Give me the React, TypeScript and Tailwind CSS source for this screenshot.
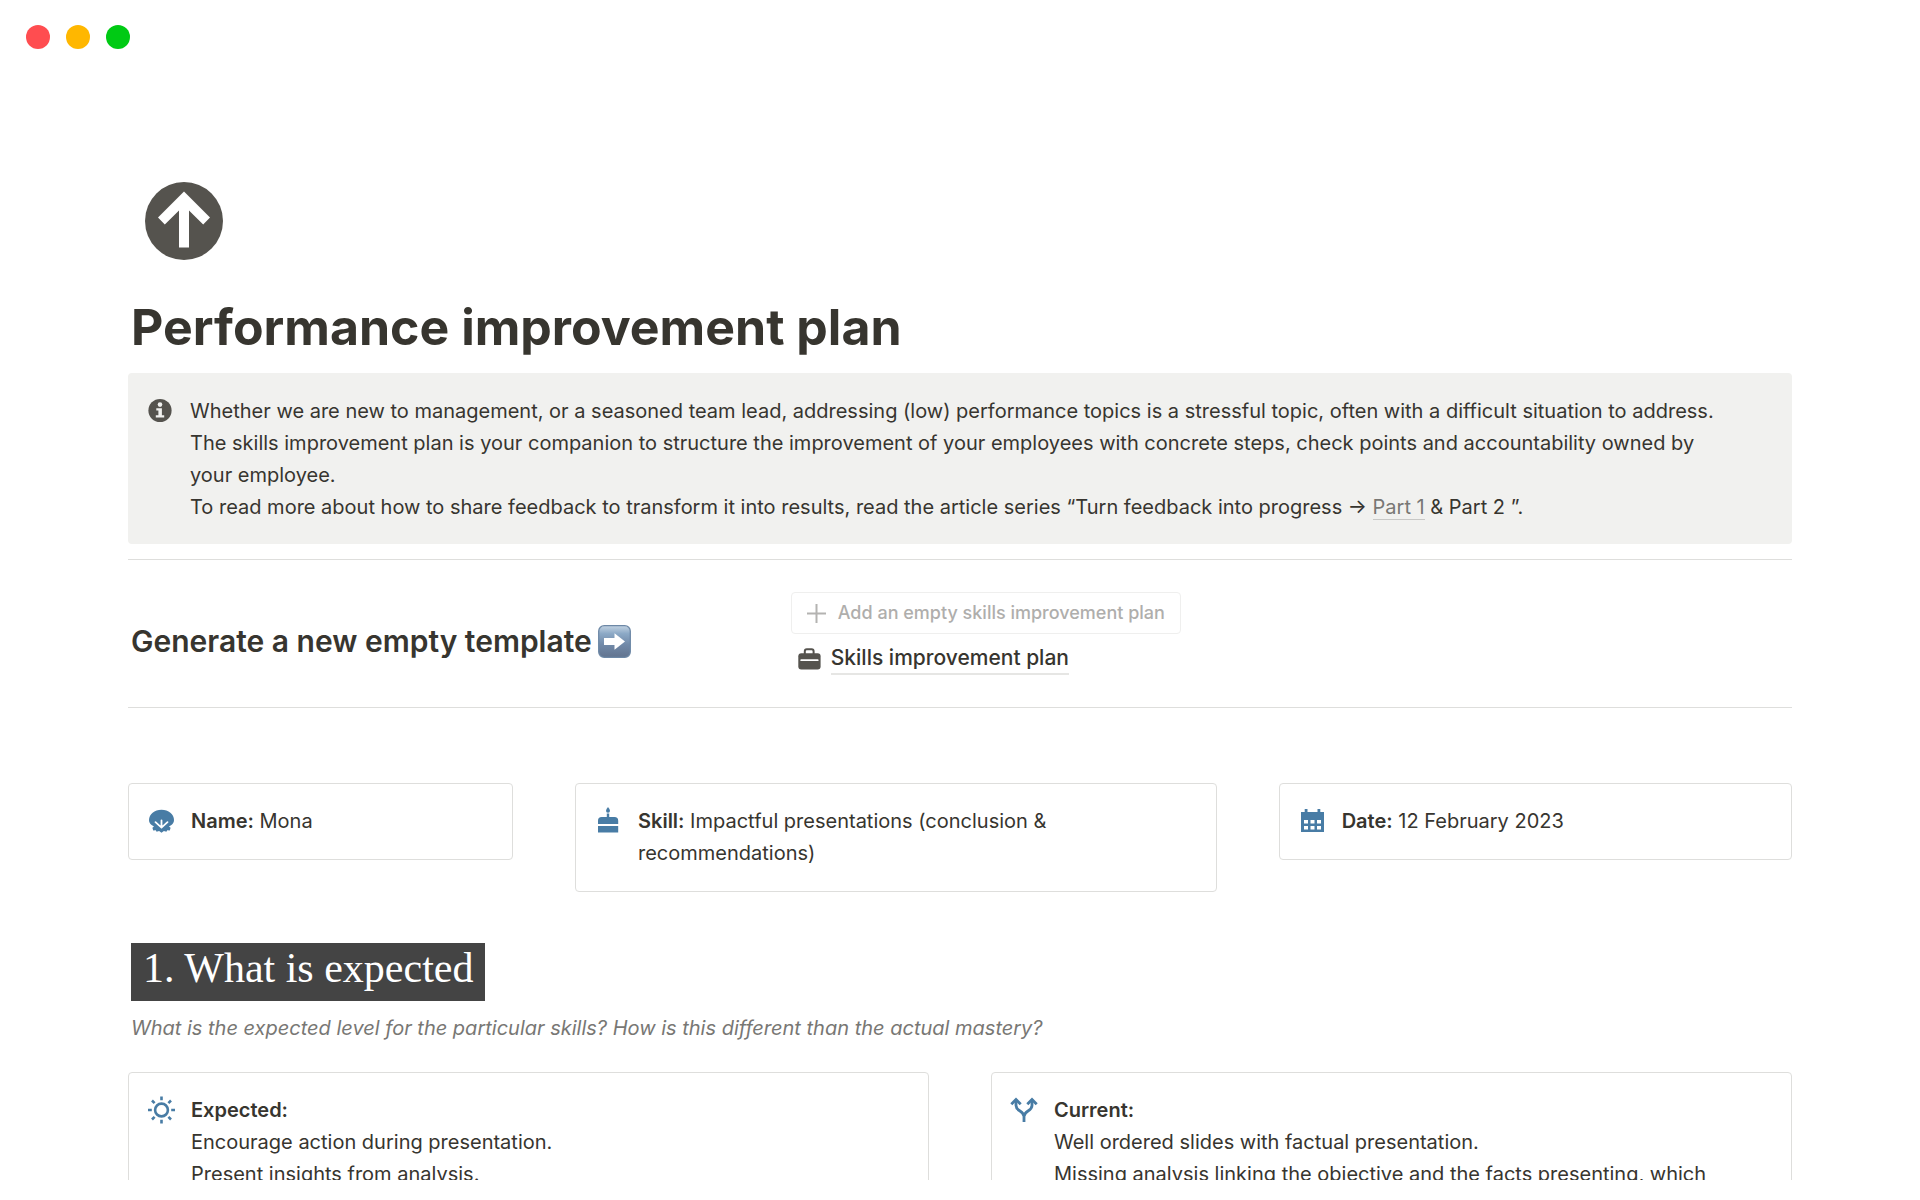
import type { ReactNode } from "react";

const TRAFFIC_LIGHTS = [
  { label: "Close", className: "bg-[#ff4d50]" },
  { label: "Minimize", className: "bg-[#ffb700]" },
  { label: "Zoom", className: "bg-[#00ca14]" }
];

const iconClass = "mt-[3px] h-[26px] w-[26px] flex-shrink-0 overflow-visible";

function PageIcon() {
  return (
    <svg viewBox="0 0 78 78" className="ml-[14px] h-[78px] w-[78px]">
      <circle cx="39" cy="39" r="39" fill="#55534e" />
      <path d="M39 9.500 65 35.500 58.200 42.500 44 28.400V65.500H34V28.400L19.800 42.500 13 35.500Z" fill="#fff" />
    </svg>
  );
}

function InfoIcon() {
  return (
    <svg viewBox="0 0 26 26" className={iconClass}>
      <circle cx="12" cy="12.500" r="11.600" fill="#55534e" />
      <circle cx="12" cy="6.600" r="2.300" fill="#f1f1ef" />
      <path d="M8.300 10.300h5.600v7h2.300v2.300H7.800v-2.300h2.600v-4.700H8.300Z" fill="#f1f1ef" />
    </svg>
  );
}

function BriefcaseIcon() {
  return (
    <svg viewBox="0 0 23 22" className="h-[22px] w-[23px] flex-shrink-0">
      <path d="M6.800 6V3.200Q6.800 1.200 8.800 1.200h4.800Q15.600 1.200 15.600 3.200V6" fill="none" stroke="#55534e" strokeWidth="2" />
      <rect x="0.300" y="5.200" width="22.300" height="16.300" rx="3" fill="#55534e" />
      <path d="M3.200 12.200h16.500" stroke="#fff" strokeWidth="1.800" strokeLinecap="round" />
    </svg>
  );
}

function ShellIcon() {
  return (
    <svg viewBox="0 0 26 26" className={iconClass}>
      <path
        d="M12.500 1.700C19.500 1.700 25 6.200 25 12c0 2.200-.9 3.800-2.600 4.900l-2.400 1.700 1.600 1.200-.8 2.600-2.600-.2-.8 1.600-2.500-.8-2.400 1.700-2.400-1.700-2.500.8-.8-1.600-2.600.2-.8-2.600L5 18.600l-2.400-1.700C.9 15.800 0 14.200 0 12 0 6.200 5.500 1.700 12.500 1.700Z"
        fill="#487ca5"
      />
      <path d="M12.500 12.500v7M6.500 14.200l6 5.400 6-5.400" fill="none" stroke="#fff" strokeWidth="1.800" strokeLinecap="round" />
    </svg>
  );
}

function CakeIcon() {
  return (
    <svg viewBox="0 0 26 26" className={iconClass} fill="#487ca5">
      <path d="M12-1q2 2.400 2 3.700a2 2 0 0 1-4 0Q10 1.400 12-1Z" />
      <path d="M10.800 5.500h2.400V9h5.300q3.700 0 3.700 3.700V16H2v-3.300Q2 9 5.600 9h5.200Z" />
      <path d="M2 18h20.200v6.500H2Z" />
    </svg>
  );
}

function CalendarIcon() {
  return (
    <svg viewBox="0 0 26 26" className={iconClass}>
      <path d="M4.700 1h2.800v3h10V1h2.800v3H24v20H1V4h3.700Z" fill="#487ca5" />
      <path
        d="M4 12h4v3.600H4ZM10.500 12h4v3.600h-4ZM17 12h4v3.600h-4ZM4 18h4v3.400H4ZM10.500 18h4v3.400h-4ZM17 18h4v3.400h-4Z"
        fill="#fff"
      />
    </svg>
  );
}

function SunIcon() {
  return (
    <svg viewBox="0 0 26 26" className={iconClass} fill="none" stroke="#487ca5" strokeWidth="2.600">
      <circle cx="12.500" cy="13" r="6.400" />
      <path d="M12.500-.5v3.800M12.500 22.700v3.800M-1 13h3.800M22.200 13H26M3 3.500 5.600 6.100M19.400 19.900 22 22.500M22 3.500l-2.600 2.600M5.600 19.900 3 22.500" />
    </svg>
  );
}

function ForkIcon() {
  return (
    <svg viewBox="0 0 26 26" className={iconClass} fill="none" stroke="#487ca5" strokeWidth="2.800">
      <path d="M4 2.500V8.500C4 14.500 12 13.500 12 19.500V25M20 2.500V8.500C20 14.500 12 13.500 12 19.500" />
      <path d="M-.7 7.300 4 2.600 8.700 7.300M15.300 7.300 20 2.600 24.700 7.300" />
    </svg>
  );
}

function ArrowEmoji() {
  return (
    <svg viewBox="0 0 33 33" className="h-[33px] w-[33px] flex-shrink-0" role="img" aria-label="right arrow">
      <defs>
        <linearGradient id="arrow-face" x1="0" y1="0" x2="0" y2="1">
          <stop offset="0" stopColor="#c3d3e2" />
          <stop offset="0.250" stopColor="#8ca9c6" />
          <stop offset="0.600" stopColor="#7189a8" />
          <stop offset="1" stopColor="#62748f" />
        </linearGradient>
      </defs>
      <rect x="0.700" y="0.700" width="31.600" height="31.600" rx="5.500" fill="url(#arrow-face)" stroke="#6d88a6" strokeWidth="1.300" />
      <path d="M6 13h10.500V8.200L27 16.500 16.500 24.800V20H6Z" fill="#fff" />
    </svg>
  );
}

function Card({ icon, children }: { icon: ReactNode; children: ReactNode }) {
  return (
    <div className="flex items-start gap-4 rounded-[4px] border border-[#dededc] px-5 pt-[21px] pb-[22px]">
      {icon}
      <div className="min-w-0 flex-1">{children}</div>
    </div>
  );
}

export default function App() {
  return (
    <div className="flex h-screen flex-col overflow-hidden bg-white pb-5 font-['Inter',sans-serif] text-[20px] leading-[32px] text-[#37352f]">
      {/* Window controls */}
      <header className="flex flex-shrink-0 gap-4 px-[26px] pt-[25px]">
        {TRAFFIC_LIGHTS.map((light) => (
          <button key={light.label} aria-label={light.label} className={`h-6 w-6 rounded-full ${light.className}`} />
        ))}
      </header>

      <main className="min-h-0 flex-1 overflow-hidden px-32 pt-[133px]">
        <div className="px-[3px]">
          <PageIcon />
          <h1 className="mt-9 text-[50px] leading-[63px] font-bold">Performance improvement plan</h1>
        </div>

        {/* Intro callout */}
        <section className="mt-[14px] flex items-start gap-4 rounded-[4px] bg-[#f1f1ef] pt-[22px] pr-14 pb-[21px] pl-5">
          <InfoIcon />
          <div className="min-w-0 flex-1">
            <p>
              Whether we are new to management, or a seasoned team lead, addressing (low) performance topics is a
              stressful topic, often with a difficult situation to address.
              <br />
              The skills improvement plan is your companion to structure the improvement of your employees with
              concrete steps, check points and accountability owned by your employee.
            </p>
            <p>
              To read more about how to share feedback to transform it into results, read the article series “Turn
              feedback into progress →{" "}
              <a href="#part-1" className="border-b border-[#c8c8c6] text-[#787774]">
                Part 1
              </a>{" "}
              &amp; Part 2 ”.
            </p>
          </div>
        </section>

        <hr className="mt-[15px] border-[#dededc]" />

        {/* Template generator */}
        <section className="mt-8 grid grid-cols-[3fr_5fr] items-start gap-[62px]">
          <h2 className="mt-7 flex items-center gap-[6px] pl-[3px] text-[30px] leading-[42px] font-semibold whitespace-nowrap">
            Generate a new empty template
            <ArrowEmoji />
          </h2>
          <div>
            <button className="flex h-[42px] items-center gap-3 rounded-[4px] border border-[#efefee] px-[15px] text-[18px] font-medium text-[#afaeac]">
              <svg viewBox="0 0 19 19" className="h-[19px] w-[19px]" stroke="#b4b3b1" strokeWidth="2">
                <path d="M9.500 0v19M0 9.500h19" />
              </svg>
              Add an empty skills improvement plan
            </button>
            <a href="#skills-improvement-plan" className="mt-[9px] flex w-fit items-center gap-[10px] pl-[7px] text-[21px] font-medium">
              <BriefcaseIcon />
              <span className="border-b-2 border-[#e6e6e4] leading-[30px]">Skills improvement plan</span>
            </a>
          </div>
        </section>

        <hr className="mt-8 border-[#dededc]" />

        <section className="mt-[75px] grid grid-cols-[3fr_5fr_4fr] items-start gap-[62px]">
          <Card icon={<ShellIcon />}>
            <strong className="font-semibold">Name:</strong> Mona
          </Card>
          <Card icon={<CakeIcon />}>
            <strong className="font-semibold">Skill:</strong> Impactful presentations (conclusion &amp;
            recommendations)
          </Card>
          <Card icon={<CalendarIcon />}>
            <strong className="font-semibold">Date:</strong> 12 February 2023
          </Card>
        </section>

        {/* 1. What is expected */}
        <section className="mt-[51px]">
          <div className="px-[3px]">
            <h2 className="w-fit bg-[#444] px-3 pb-2 font-['Liberation_Serif',serif] text-[42px] leading-[50px] text-white">
              1. What is expected
            </h2>
            <p className="mt-[11px] text-[#787774] italic">
              What is the expected level for the particular skills? How is this different than the actual mastery?
            </p>
          </div>
          <div className="mt-7 grid grid-cols-2 gap-[62px]">
            <Card icon={<SunIcon />}>
              <strong className="font-semibold">Expected:</strong>
              <p>Encourage action during presentation.</p>
              <p>Present insights from analysis.</p>
            </Card>
            <Card icon={<ForkIcon />}>
              <strong className="font-semibold">Current:</strong>
              <p>Well ordered slides with factual presentation.</p>
              <p>Missing analysis linking the objective and the facts presenting, which</p>
            </Card>
          </div>
        </section>
      </main>
    </div>
  );
}
